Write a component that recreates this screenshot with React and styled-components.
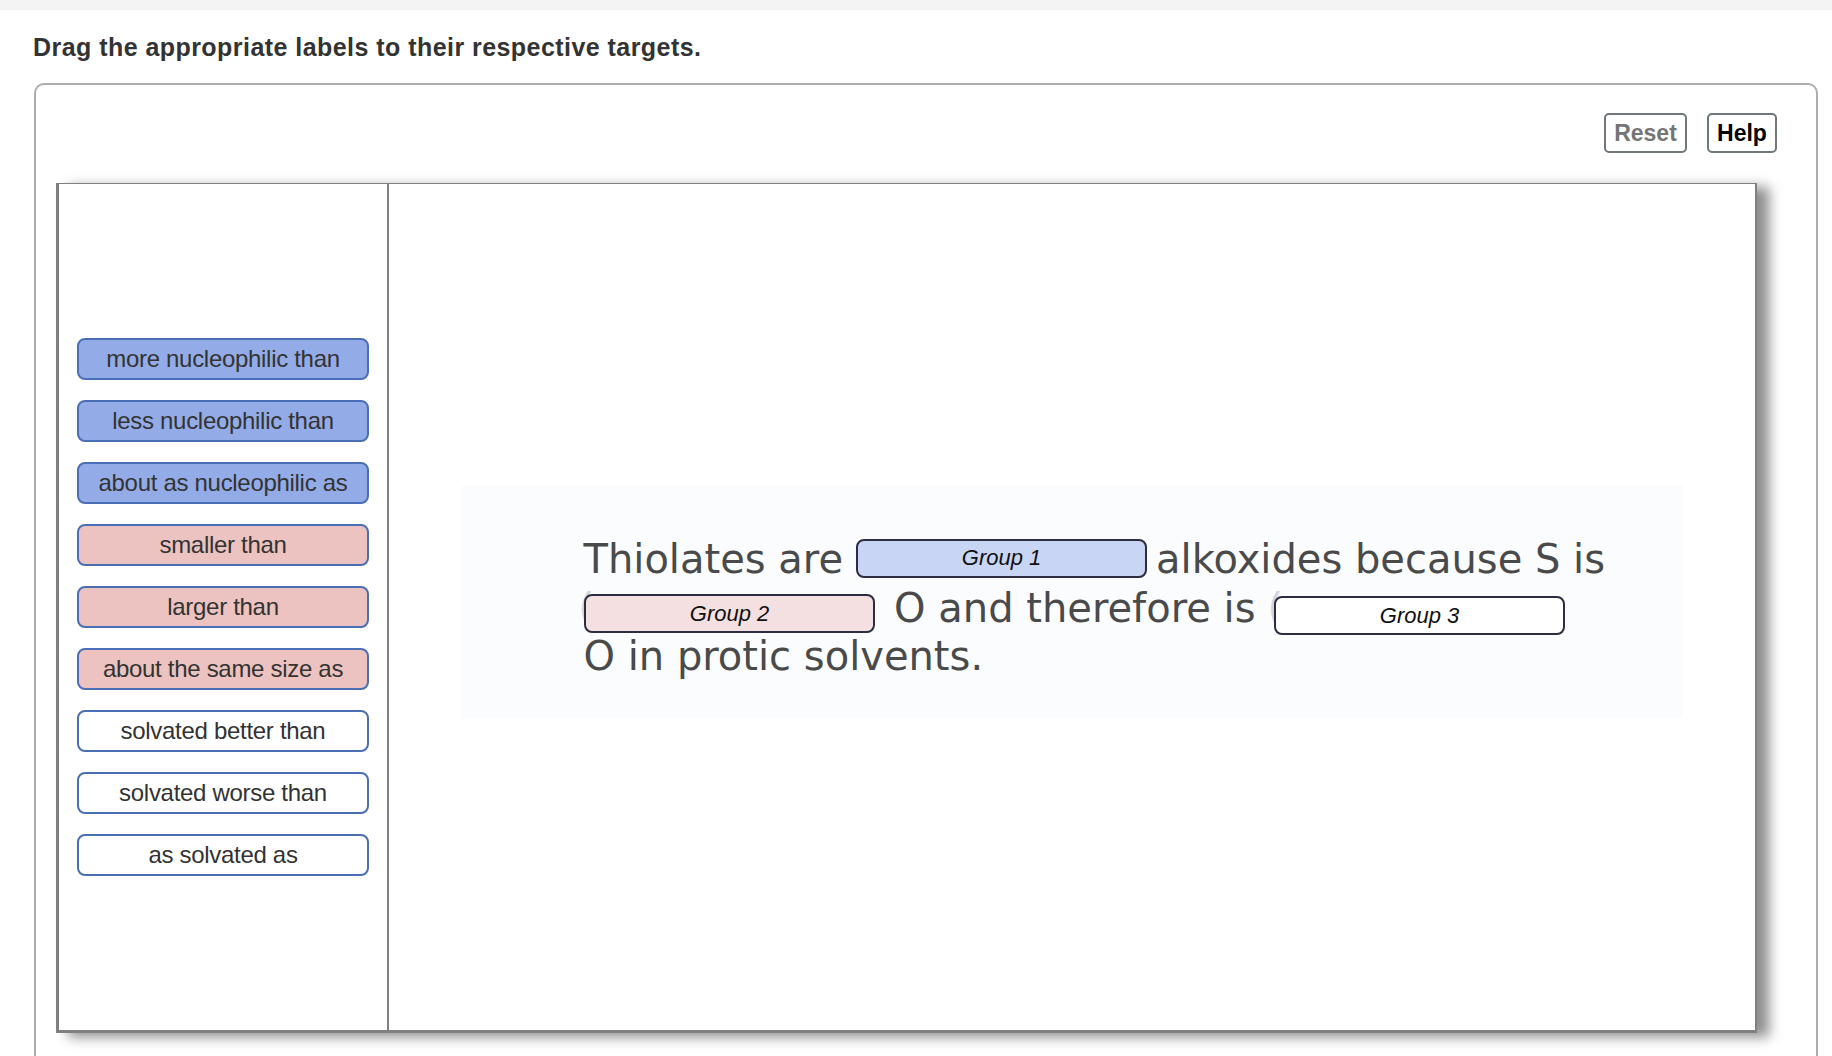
import React from "react";
import styled, { createGlobalStyle } from "styled-components";

const Global = createGlobalStyle`
  html, body {
    margin: 0;
    padding: 0;
    background: #ffffff;
    overflow: hidden;
    font-family: "Liberation Sans", Arial, Helvetica, sans-serif;
  }
  * { box-sizing: border-box; }
`;

const TopBar = styled.div`
  height: 10px;
  background: #f4f4f4;
`;

const Page = styled.div`
  padding: 0 14px 0 34px;
`;

const Heading = styled.h1`
  margin: 22px 0 21px -1px;
  font-size: 25px;
  line-height: 30px;
  font-weight: 700;
  letter-spacing: 0.45px;
  color: #333333;
`;

const Frame = styled.div`
  height: 1000px;
  border: 2px solid #acacac;
  border-bottom: none;
  border-radius: 10px 10px 0 0;
  padding: 28px 39px 0 20px;
`;

const Toolbar = styled.div`
  display: flex;
  justify-content: flex-end;
  gap: 20px;
  margin-bottom: 30px;
`;

const ToolButton = styled.button`
  width: ${(p) => p.$w}px;
  height: 40px;
  padding: 0;
  background: #ffffff;
  border: 2px solid #6f777a;
  border-radius: 5px;
  font-family: "Liberation Sans", Arial, sans-serif;
  font-weight: 700;
  font-size: 23px;
  color: ${(p) => (p.$muted ? "#757575" : "#000000")};
`;

const Panel = styled.div`
  display: grid;
  grid-template-columns: 330px 1fr;
  height: 850px;
  margin-right: 20px;
  border-style: solid;
  border-color: #808080;
  border-width: 1px 2px 3px 3px;
  box-shadow: 12px 4px 12px rgba(0, 0, 0, 0.45);
  background: #ffffff;
`;

const LabelColumn = styled.div`
  display: flex;
  flex-direction: column;
  justify-content: center;
  gap: 20px;
  padding: 0 18px 1px 18px;
  border-right: 2px solid #808080;
`;

const Label = styled.div`
  height: 42px;
  display: flex;
  align-items: center;
  justify-content: center;
  border: 2px solid #4a6fb6;
  border-radius: 8px;
  background: ${(p) => p.$bg};
  font-size: 24px;
  letter-spacing: -0.3px;
  color: #333333;
`;

const Stage = styled.div`
  display: flex;
  align-items: center;
  justify-content: center;
  padding-bottom: 12px;
`;

const SentenceBox = styled.div`
  width: 1221px;
  height: 233px;
  background: #fbfcfe;
  padding: 50px 0 0 122px;
  font-family: "DejaVu Sans", Verdana, sans-serif;
  font-size: 40px;
  color: #4a4a4a;
`;

const Line = styled.div`
  display: flex;
  align-items: center;
  height: ${(p) => p.$h || 48}px;
  white-space: nowrap;
`;

const Words = styled.span`
  line-height: 48px;
  margin-left: ${(p) => p.$ml || 0}px;
`;

const Paren = styled.span`
  line-height: 48px;
  color: #d4d4d8;
  margin-left: ${(p) => p.$ml}px;
  margin-right: ${(p) => p.$mr}px;
`;

const Target = styled.div`
  width: 291px;
  height: 39px;
  margin-left: ${(p) => p.$ml || 0}px;
  margin-top: ${(p) => (p.$shift || 0) * 2}px;
  display: flex;
  align-items: center;
  justify-content: center;
  border: 2px solid #2c2c42;
  border-radius: 8px;
  background: ${(p) => p.$bg};
  font-family: "Liberation Sans", Arial, sans-serif;
  font-style: italic;
  font-size: 22px;
  color: #111111;
`;

const BLUE = "#93ace8";
const PINK = "#ecc3c0";
const WHITE = "#ffffff";

const labels = [
  ["more nucleophilic than", BLUE],
  ["less nucleophilic than", BLUE],
  ["about as nucleophilic as", BLUE],
  ["smaller than", PINK],
  ["larger than", PINK],
  ["about the same size as", PINK],
  ["solvated better than", WHITE],
  ["solvated worse than", WHITE],
  ["as solvated as", WHITE],
];

export default function App() {
  return (
    <>
      <Global />
      <TopBar />
      <Page>
        <Heading>Drag the appropriate labels to their respective targets.</Heading>
        <Frame>
          <Toolbar>
            <ToolButton $w={83} $muted>Reset</ToolButton>
            <ToolButton $w={70}>Help</ToolButton>
          </Toolbar>
          <Panel>
            <LabelColumn>
              {labels.map(([text, bg]) => (
                <Label key={text} $bg={bg}>{text}</Label>
              ))}
            </LabelColumn>
            <Stage>
              <SentenceBox>
                <Line $h={49}>
                  <Words>Thiolates are</Words>
                  <Target $ml={13} $shift={-1} $bg="#c8d5f5">Group 1</Target>
                  <Words $ml={9}>alkoxides because S is</Words>
                </Line>
                <Line $h={48}>
                  <Paren $ml={-5} $mr={-10}>(</Paren>
                  <Target $shift={6} $bg="#f4e0e0">Group 2</Target>
                  <Words $ml={19}>O and therefore is</Words>
                  <Paren $ml={12} $mr={-9}>(</Paren>
                  <Target $shift={8} $bg="#ffffff">Group 3</Target>
                </Line>
                <Line $h={48}>
                  <Words>O in protic solvents.</Words>
                </Line>
              </SentenceBox>
            </Stage>
          </Panel>
        </Frame>
      </Page>
    </>
  );
}
